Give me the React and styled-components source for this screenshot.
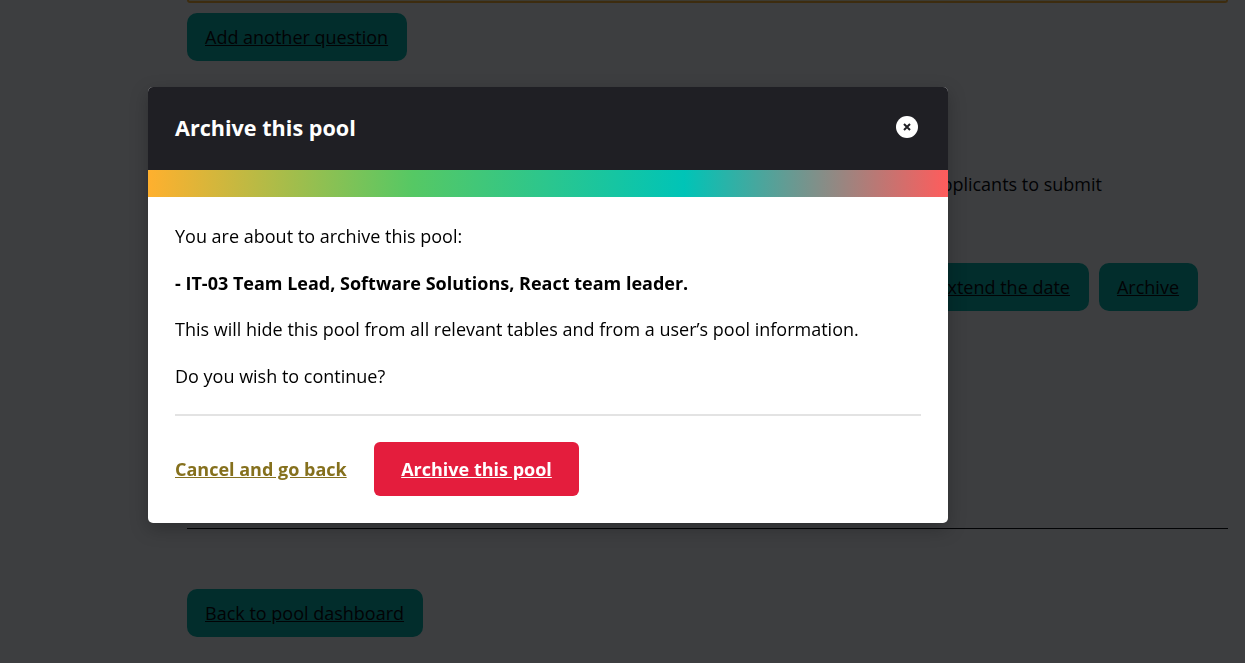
import styled, { createGlobalStyle } from "styled-components";

const GlobalStyle = createGlobalStyle`
  html, body {
    margin: 0;
    height: 100%;
    background: #ffffff;
    overflow: hidden;
  }

  body {
    font-family: "Open Sans", "Liberation Sans", sans-serif;
    color: #000000;
  }
`;

const Page = styled.main`
  display: flex;
  flex-direction: column;
  align-items: flex-start;
  height: 663px;
  box-sizing: border-box;
  padding: 0 17px 0 187px;
`;

const NoticeEdge = styled.div`
  align-self: stretch;
  height: 3px;
  box-sizing: border-box;
  border: 2px solid #ffb02e;
  border-top: none;
  border-radius: 0 0 4px 4px;
  background: #fff3c4;
`;

const TealButton = styled.a`
  display: block;
  padding: 10px 19px 10px 18px;
  background: #00b4a8;
  border-radius: 10px;
  font-size: 18px;
  line-height: 28px;
  color: #000000;
  text-decoration: underline;
  white-space: nowrap;
`;

const AddQuestion = styled(TealButton)`
  margin-top: 10px;
`;

const ClosingText = styled.p`
  align-self: flex-end;
  margin: 109px 126px 0 0;
  font-size: 18px;
  line-height: 28px;
  white-space: nowrap;
`;

const PoolActions = styled.div`
  align-self: flex-end;
  display: flex;
  gap: 10px;
  margin: 65px 30px 0 0;
`;

const Rule = styled.hr`
  align-self: stretch;
  height: 1px;
  margin: 217px 0 0;
  border: none;
  background: #000000;
`;

const BackButton = styled(TealButton)`
  margin-top: 60px;
`;

const Overlay = styled.div`
  position: fixed;
  inset: 0;
  background: rgba(3, 4, 6, 0.77);
`;

const Dialog = styled.section`
  position: absolute;
  top: 87px;
  left: 148px;
  width: 800px;
  border-radius: 5px;
  overflow: hidden;
  background: #ffffff;
  box-shadow: 0 6px 18px rgba(0, 0, 0, 0.25);
`;

const DialogHeader = styled.header`
  display: flex;
  align-items: center;
  justify-content: space-between;
  height: 83px;
  box-sizing: border-box;
  padding: 0 30px 2px 27px;
  background: #1f1f24;
`;

const DialogTitle = styled.h2`
  margin: 0;
  font-size: 21.6px;
  font-weight: 700;
  line-height: 28px;
  color: #ffffff;
`;

const CloseButton = styled.button`
  display: flex;
  align-items: center;
  justify-content: center;
  width: 22px;
  height: 22px;
  margin-bottom: 2px;
  padding: 0;
  border: none;
  border-radius: 50%;
  background: #ffffff;
  color: #1f1f24;
`;

const GradientBar = styled.div`
  height: 27px;
  background: linear-gradient(90deg, #ffb02e 0%, #56c864 33%, #00c4b7 67%, #ff5c5c 100%);
`;

const DialogBody = styled.div`
  padding: 26px 27px 27px;
`;

const Paragraph = styled.p`
  margin: 0 0 19.6px;
  font-size: 18px;
  font-weight: ${({ $strong }) => ($strong ? 700 : 400)};
  line-height: 27px;
`;

const Divider = styled.hr`
  height: 2px;
  margin: 24px 0 26px;
  border: none;
  background: #e3e3e3;
`;

const DialogActions = styled.div`
  display: flex;
  align-items: center;
  gap: 27px;
`;

const CancelLink = styled.a`
  font-size: 18px;
  font-weight: 700;
  line-height: 28px;
  color: #85701d;
  text-decoration: underline;
`;

const DangerButton = styled.a`
  display: block;
  padding: 13px 27.5px;
  background: #e41d3d;
  border-radius: 6px;
  font-size: 18px;
  font-weight: 700;
  line-height: 28px;
  color: #ffffff;
  text-decoration: underline;
`;

export default function App() {
  return (
    <>
      <GlobalStyle />
      <Page>
        <NoticeEdge />
        <AddQuestion>Add another question</AddQuestion>
        <ClosingText>The closing date is when you stop accepting applicants to submit</ClosingText>
        <PoolActions>
          <TealButton>Extend the date</TealButton>
          <TealButton>Archive</TealButton>
        </PoolActions>
        <Rule />
        <BackButton>Back to pool dashboard</BackButton>
      </Page>
      <Overlay>
        <Dialog>
          <DialogHeader>
            <DialogTitle>Archive this pool</DialogTitle>
            <CloseButton aria-label="Close">
              <svg width="10" height="10" viewBox="0 0 10 10" fill="none">
                <path d="M2 2 L8 8 M8 2 L2 8" stroke="currentColor" strokeWidth="2" />
              </svg>
            </CloseButton>
          </DialogHeader>
          <GradientBar />
          <DialogBody>
            <Paragraph>You are about to archive this pool:</Paragraph>
            <Paragraph $strong>- IT-03 Team Lead, Software Solutions, React team leader.</Paragraph>
            <Paragraph>This will hide this pool from all relevant tables and from a user’s pool information.</Paragraph>
            <Paragraph>Do you wish to continue?</Paragraph>
            <Divider />
            <DialogActions>
              <CancelLink>Cancel and go back</CancelLink>
              <DangerButton>Archive this pool</DangerButton>
            </DialogActions>
          </DialogBody>
        </Dialog>
      </Overlay>
    </>
  );
}
